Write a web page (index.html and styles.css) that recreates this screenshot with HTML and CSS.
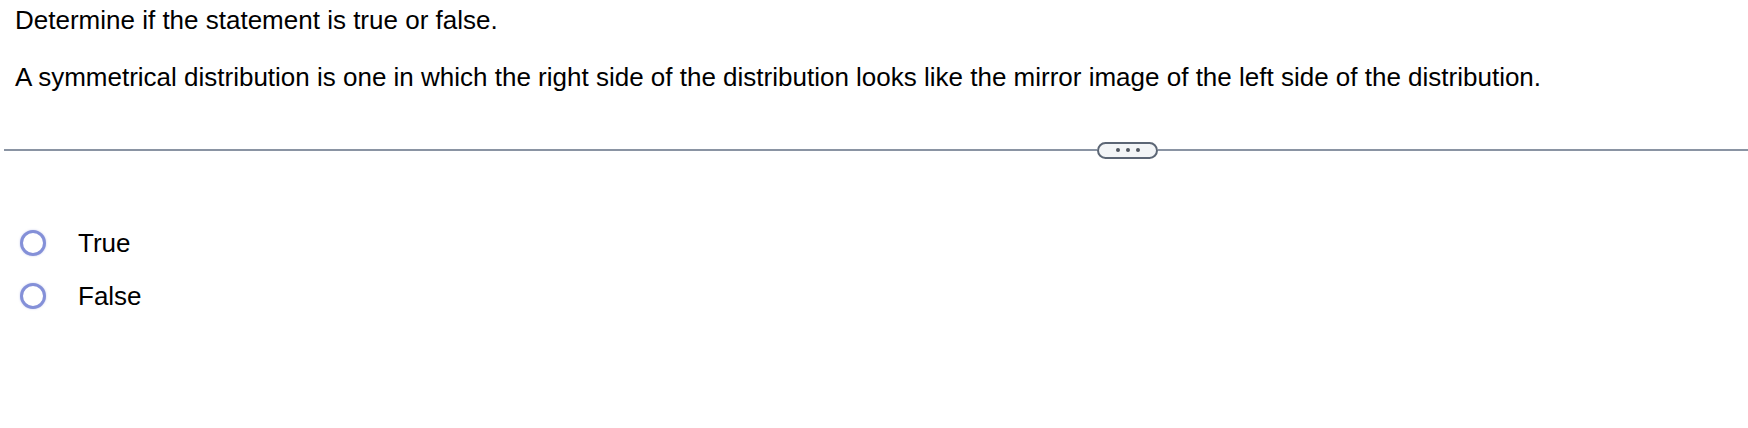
FILE: index.html
```html
<!DOCTYPE html>
<html lang="en">
<head>
    <meta charset="UTF-8">
    <meta name="viewport" content="width=device-width, initial-scale=1.0">
    <title>True or False</title>
    <link rel="stylesheet" href="styles.css">
</head>
<body>
    <div class="question">
        <p class="prompt">Determine if the statement is true or false.</p>
        <p class="statement">A symmetrical distribution is one in which the right side of the distribution looks like the mirror image of the left side of the distribution.</p>
    </div>

    <div class="divider">
        <button class="more-button"><span class="dot"></span><span class="dot"></span><span class="dot"></span></button>
    </div>

    <div class="choices">
        <label class="choice"><span class="radio"></span><span class="choice-text">True</span></label>
        <label class="choice"><span class="radio"></span><span class="choice-text">False</span></label>
    </div>
</body>
</html>
```

FILE: styles.css
```css
body{
    margin: 0;
    background-color: white;
    color: black;
    font-family: "Liberation Sans", Arial, Helvetica, sans-serif;
    font-size: 26px;
}
p{
    margin: 0;
    line-height: 30px;
}
.question{
    padding-top: 5px;
    padding-left: 15px;
}
.statement{
    margin-top: 27px;
}
.divider{
    display: flex;
    align-items: center;
    margin-top: 50px;
    margin-left: 4px;
    height: 16px;
}
.divider::before{
    content: "";
    width: 1093px;
    height: 2px;
    background-color: rgb(138,148,163);
}
.divider::after{
    content: "";
    flex: 1;
    height: 2px;
    background-color: rgb(138,148,163);
}
.more-button{
    display: flex;
    align-items: center;
    justify-content: center;
    gap: 6px;
    width: 61px;
    height: 17px;
    padding: 0;
    border: 2px solid rgb(92,102,117);
    border-radius: 9px;
    background-color: rgb(243,245,247);
}
.dot{
    width: 4px;
    height: 4px;
    border-radius: 50%;
    background-color: rgb(80,86,96);
}
.choices{
    display: flex;
    flex-direction: column;
    gap: 23px;
    margin-top: 70px;
    padding-left: 20px;
}
.choice{
    display: flex;
    align-items: center;
    height: 30px;
}
.radio{
    box-sizing: border-box;
    width: 26px;
    height: 26px;
    border: 3px solid rgb(132,144,216);
    border-radius: 50%;
    background-color: white;
    box-shadow: 0 0 2px rgba(132,144,216,0.5);
}
.choice-text{
    margin-left: 32px;
    line-height: 30px;
}
```
